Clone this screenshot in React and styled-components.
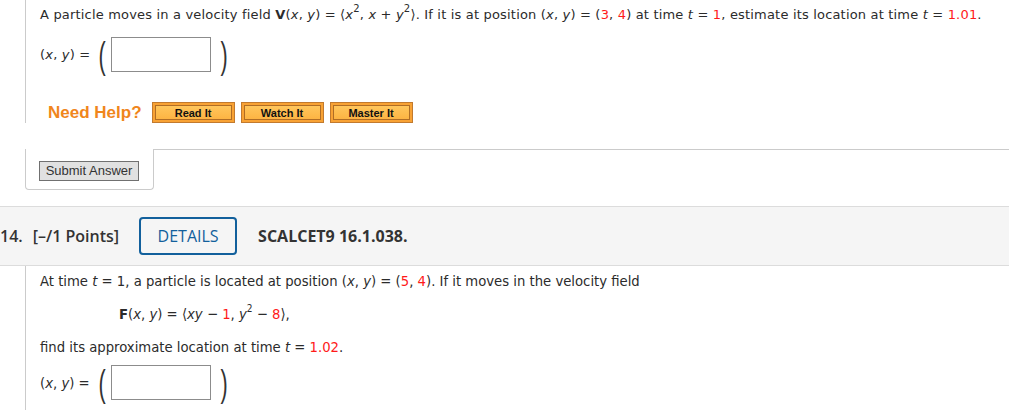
import React from "react";
import styled, { createGlobalStyle } from "styled-components";

const GlobalStyle = createGlobalStyle`
  html, body { margin: 0; padding: 0; background: #fff; }
  body { overflow: hidden; width: 1009px; height: 411px; }
`;

const Page = styled.div`
  width: 1009px;
  display: flex;
  flex-direction: column;
`;

const QuestionBlock = styled.div`
  margin-left: 25px;
  display: flex;
  flex-direction: column;
`;

const Body = styled.div`
  border-left: 1px solid #cbcbcb;
  padding: ${(p) => p.$pad};
  display: flex;
  flex-direction: column;
  font-family: ${(p) => (p.$condensed ? '"DejaVu Sans Condensed", "DejaVu Sans", sans-serif' : '"DejaVu Sans", Verdana, sans-serif')};
  font-size: ${(p) => (p.$condensed ? "14.7px" : "13px")};
  letter-spacing: ${(p) => (p.$condensed ? "0" : "0.18px")};
  color: #2b2b2b;
`;

const Line = styled.div`
  line-height: 18px;
  margin: ${(p) => p.$m || "0"};
  padding-left: ${(p) => p.$indent || "0"};
  white-space: nowrap;
`;

const I = styled.i`
  font-style: italic;
`;

const B = styled.b`
  font-weight: bold;
`;

const Red = styled.span`
  color: #ff1a1a;
`;

const Sup = styled.sup`
  font-size: 10px;
  vertical-align: 7px;
  line-height: 0;
`;

const AnswerRow = styled.div`
  display: flex;
  align-items: center;
  height: 35px;
  margin: ${(p) => p.$m};
`;

const AnswerLabel = styled.span`
  line-height: 18px;
  margin-right: 6px;
`;

const Paren = styled.span`
  display: inline-block;
  font-family: "Liberation Sans", Arial, sans-serif;
  font-weight: normal;
  font-size: 36px;
  line-height: 35px;
  color: #333;
  transform: scale(0.6, 1.05);
  margin: ${(p) => p.$m};
`;

const AnswerBox = styled.div`
  box-sizing: border-box;
  width: 100px;
  height: 35px;
  border: 1px solid #8c8c8c;
  background: #fff;
`;

const HelpRow = styled.div`
  display: flex;
  align-items: center;
  margin: 30px 0 0 8px;
  gap: 6px;
`;

const HelpLabel = styled.span`
  font-family: "Liberation Sans", Arial, sans-serif;
  font-weight: bold;
  font-size: 17px;
  letter-spacing: 0;
  color: #f0861c;
  margin-right: 4px;
`;

const HelpButton = styled.div`
  box-sizing: border-box;
  width: 83px;
  height: 21px;
  padding: 2px;
  border: 1px solid #c27a2e;
  background: #f8a234;
  display: flex;
`;

const HelpInner = styled.div`
  flex: 1;
  border: 1px solid #b06d25;
  background: linear-gradient(#ffc65c, #fdb443);
  display: flex;
  align-items: center;
  justify-content: center;
  font-family: "Liberation Sans", Arial, sans-serif;
  font-weight: bold;
  font-size: 11px;
  letter-spacing: 0;
  color: #111;
`;

const FooterRow = styled.div`
  display: flex;
  margin-top: 26px;
`;

const SubmitTab = styled.div`
  border: 1px solid #cbcbcb;
  border-top: none;
  border-radius: 0 0 4px 4px;
  padding: 12px 14px 8px 13px;
`;

const SubmitButton = styled.button`
  box-sizing: border-box;
  width: 100px;
  height: 20px;
  padding: 0;
  border: 1px solid #707070;
  background: #e1e1e1;
  font-family: "Liberation Sans", Arial, sans-serif;
  font-size: 13px;
  color: #333;
  line-height: 18px;
`;

const FooterRule = styled.div`
  flex: 1;
  align-self: flex-start;
  border-top: 1px solid #cbcbcb;
`;

const Header = styled.div`
  margin-top: 16px;
  height: 58px;
  border-top: 1px solid #dcdcdc;
  border-bottom: 1px solid #dcdcdc;
  background: #f5f5f5;
  display: flex;
  align-items: center;
  font-family: "Open Sans", sans-serif;
  font-size: 16px;
  color: #333;
`;

const Num = styled.span`
  font-weight: 600;
  margin-left: 0;
  margin-right: 10px;
`;

const Points = styled.span`
  font-weight: 600;
  margin-right: 20px;
`;

const DetailsButton = styled.div`
  box-sizing: border-box;
  width: 98px;
  height: 38px;
  border: 2px solid #12609c;
  border-radius: 4px;
  display: flex;
  align-items: center;
  justify-content: center;
  color: #12609c;
  font-size: 16px;
  margin-right: 21px;
`;

const Code = styled.span`
  font-weight: 700;
`;

function Answer({ m }) {
  return (
    <AnswerRow $m={m}>
      <AnswerLabel>
        (<I>x</I>, <I>y</I>) =
      </AnswerLabel>
      <Paren $m="0 3px 0 0">(</Paren>
      <AnswerBox />
      <Paren $m="0 0 0 7px">)</Paren>
    </AnswerRow>
  );
}

export default function App() {
  return (
    <>
      <GlobalStyle />
      <Page>
        <QuestionBlock>
          <Body $pad="6px 0 0 14px">
            <Line>
              A particle moves in a velocity field <B>V</B>(<I>x</I>, <I>y</I>) = ⟨<I>x</I>
              <Sup>2</Sup>, <I>x</I> + <I>y</I>
              <Sup>2</Sup>⟩. If it is at position (<I>x</I>, <I>y</I>) = (<Red>3</Red>, <Red>4</Red>) at time{" "}
              <I>t</I> = <Red>1</Red>, estimate its location at time <I>t</I> = <Red>1.01</Red>.
            </Line>
            <Answer m="13px 0 0 0" />
            <HelpRow>
              <HelpLabel>Need Help?</HelpLabel>
              <HelpButton><HelpInner>Read It</HelpInner></HelpButton>
              <HelpButton><HelpInner>Watch It</HelpInner></HelpButton>
              <HelpButton><HelpInner>Master It</HelpInner></HelpButton>
            </HelpRow>
          </Body>
          <FooterRow>
            <SubmitTab>
              <SubmitButton>Submit Answer</SubmitButton>
            </SubmitTab>
            <FooterRule />
          </FooterRow>
        </QuestionBlock>
        <Header>
          <Num>14.</Num>
          <Points>[–/1 Points]</Points>
          <DetailsButton>DETAILS</DetailsButton>
          <Code>SCALCET9 16.1.038.</Code>
        </Header>
        <QuestionBlock>
          <Body $pad="6px 0 10px 14px" $condensed>
            <Line>
              At time <I>t</I> = 1, a particle is located at position (<I>x</I>, <I>y</I>) = (<Red>5</Red>,{" "}
              <Red>4</Red>). If it moves in the velocity field
            </Line>
            <Line $m="15px 0 0 0" $indent="79px">
              <B>F</B>(<I>x</I>, <I>y</I>) = ⟨<I>xy</I> − <Red>1</Red>, <I>y</I>
              <Sup>2</Sup> − <Red>8</Red>⟩,
            </Line>
            <Line $m="15px 0 0 0">
              find its approximate location at time <I>t</I> = <Red>1.02</Red>.
            </Line>
            <Answer m="9px 0 0 0" />
          </Body>
        </QuestionBlock>
      </Page>
    </>
  );
}
